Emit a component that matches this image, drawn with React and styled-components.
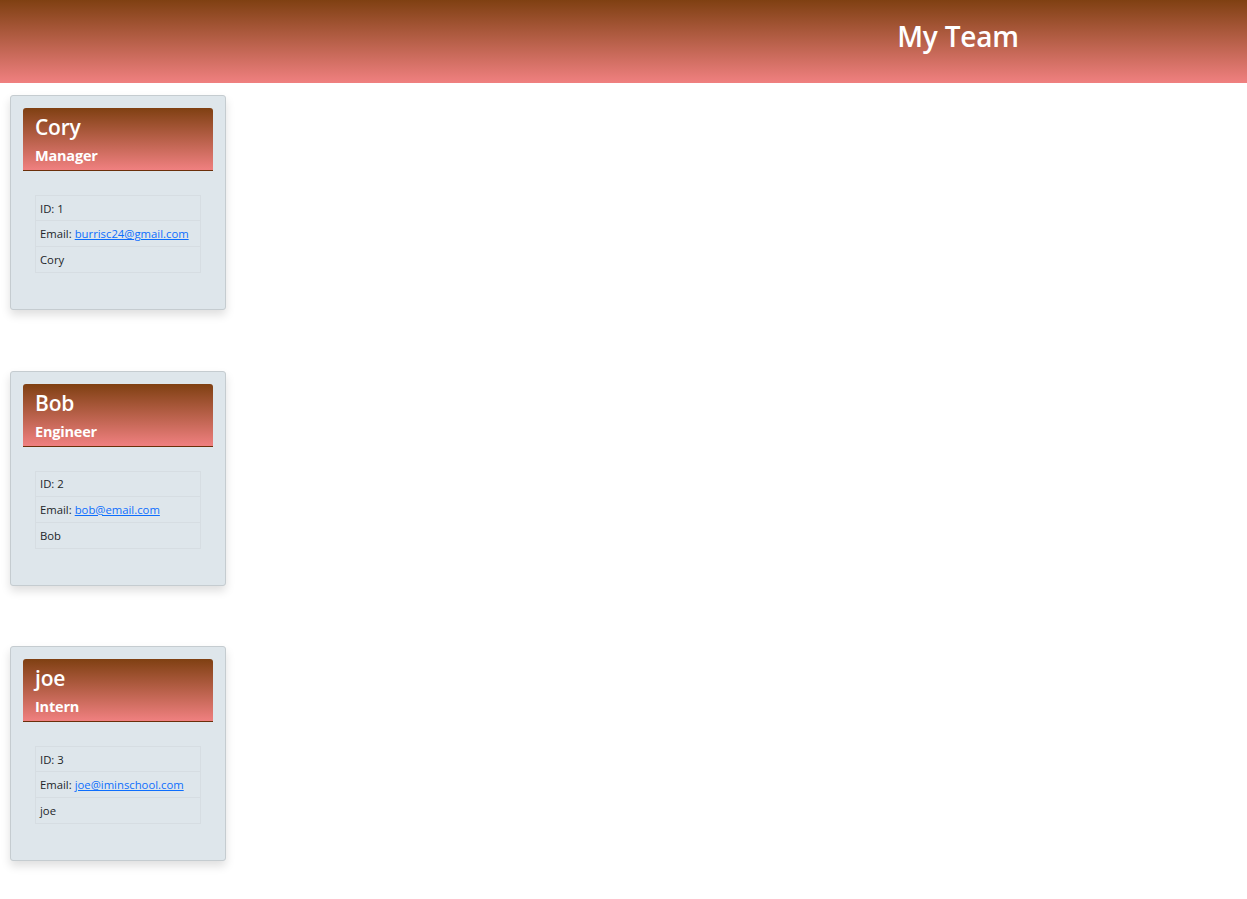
import React from "react";
import styled, { createGlobalStyle } from "styled-components";

const GlobalStyle = createGlobalStyle`
  html, body { margin: 0; padding: 0; background: #ffffff; }
  body { font-family: "Open Sans", "Noto Sans", sans-serif; color: #212529; }
  * { box-sizing: border-box; }
`;

const gradient = "linear-gradient(to bottom, #7f4012 0%, #f08080 100%)";

const Header = styled.header`
  height: 83px;
  background: ${gradient};
  display: flex;
  align-items: center;
  justify-content: center;
  padding-left: 669px;
`;

const Title = styled.h1`
  margin: 0 0 9px;
  color: #ffffff;
  font-size: 28px;
  font-weight: 600;
  line-height: 1.2;
  letter-spacing: -0.2px;
`;

const Main = styled.main`
  display: flex;
  flex-direction: column;
  align-items: flex-start;
  gap: 60.5px;
  padding: 12px 10px 40px;
`;

const Card = styled.section`
  width: 216px;
  padding: 12px;
  background: #dee6eb;
  border: 1px solid #c5ccd0;
  border-radius: 3px;
  box-shadow: 0 5px 10px rgba(0, 0, 0, 0.13);
`;

const CardHeader = styled.div`
  height: 63px;
  padding: 5px 12px 0;
  background: ${gradient};
  border-bottom: 1px solid #6b2f0a;
  border-radius: 3px 3px 0 0;
  color: #ffffff;
`;

const Name = styled.h2`
  margin: 0;
  font-size: 21px;
  font-weight: 600;
  line-height: 28px;
  letter-spacing: -0.2px;
`;

const Role = styled.h3`
  margin: 0;
  padding-top: 3px;
  font-size: 14.5px;
  font-weight: 700;
  line-height: 24px;
  letter-spacing: -0.2px;
`;

const Body = styled.div`
  padding: 24px 12px;
`;

const List = styled.ul`
  list-style: none;
  margin: 0;
  padding: 0;
`;

const Item = styled.li`
  height: 26px;
  padding: 0 4px;
  display: flex;
  align-items: center;
  font-size: 11.3px;
  color: #212529;
  border: 1px solid #d6dde2;
  & + & { border-top: none; }
`;

const Mail = styled.a`
  color: #0d6efd;
  text-decoration: underline;
  margin-left: 3px;
`;

const team = [
  { name: "Cory", role: "Manager", id: 1, email: "burrisc24@gmail.com", extra: "Cory" },
  { name: "Bob", role: "Engineer", id: 2, email: "bob@email.com", extra: "Bob" },
  { name: "joe", role: "Intern", id: 3, email: "joe@iminschool.com", extra: "joe" },
];

export default function App() {
  return (
    <>
      <GlobalStyle />
      <Header>
        <Title>My Team</Title>
      </Header>
      <Main>
        {team.map((m) => (
          <Card key={m.id}>
            <CardHeader>
              <Name>{m.name}</Name>
              <Role>{m.role}</Role>
            </CardHeader>
            <Body>
              <List>
                <Item>ID: {m.id}</Item>
                <Item>
                  Email:<Mail href={`mailto:${m.email}`}>{m.email}</Mail>
                </Item>
                <Item>{m.extra}</Item>
              </List>
            </Body>
          </Card>
        ))}
      </Main>
    </>
  );
}
